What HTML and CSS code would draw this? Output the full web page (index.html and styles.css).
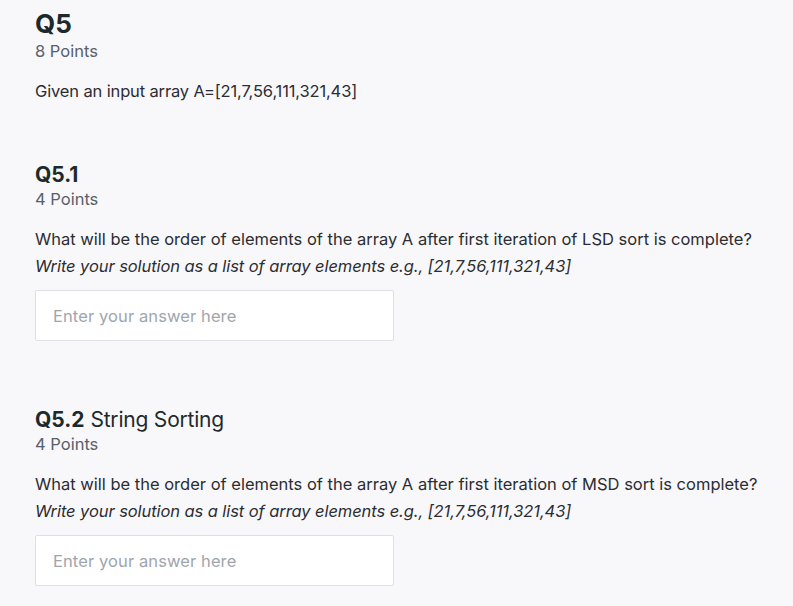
FILE: index.html
```html
<!DOCTYPE html>
<html>
<head>
<meta charset="utf-8">
<link rel="stylesheet" href="styles.css">
</head>
<body>
<div class="page">
  <section class="question">
    <div class="q-title main"><span class="q-num">Q5</span></div>
    <div class="q-points">8 Points</div>
    <div class="q-text intro">Given an input array A=[21,7,56,111,321,43]</div>
  </section>

  <section class="question sub">
    <div class="q-title"><span class="q-num">Q5.1</span></div>
    <div class="q-points">4 Points</div>
    <div class="q-text">
      <div class="line">What will be the order of elements of the array A after first iteration of LSD sort is complete?</div>
      <div class="line hint">Write your solution as a list of array elements e.g., [21,7,56,111,321,43]</div>
    </div>
    <div class="answer"><span class="placeholder">Enter your answer here</span></div>
  </section>

  <section class="question sub">
    <div class="q-title"><span class="q-num">Q5.2</span> <span class="q-name">String Sorting</span></div>
    <div class="q-points">4 Points</div>
    <div class="q-text">
      <div class="line">What will be the order of elements of the array A after first iteration of MSD sort is complete?</div>
      <div class="line hint">Write your solution as a list of array elements e.g., [21,7,56,111,321,43]</div>
    </div>
    <div class="answer"><span class="placeholder">Enter your answer here</span></div>
  </section>
</div>
</body>
</html>
```
FILE: styles.css
```css
html, body {
  margin: 0;
  padding: 0;
  background: #f8f8fa;
}
body {
  font-family: Inter, "Open Sans", sans-serif;
  color: #2b2d33;
}
.page {
  padding: 8px 35px 0 35px;
}
.question {
  display: flex;
  flex-direction: column;
  align-items: flex-start;
}
.question.sub {
  margin-top: 56px;
}
.q-title {
  font-size: 21px;
  line-height: 27px;
  font-weight: 400;
  color: #1d2a2c;
  white-space: nowrap;
}
.q-title.main {
  font-size: 26px;
  line-height: 32px;
}
.q-num {
  font-weight: 700;
}
.q-name {
  font-weight: 400;
  letter-spacing: -0.2px;
}
.q-points {
  font-size: 16.5px;
  line-height: 22px;
  color: #59606b;
}
.q-text {
  margin-top: 16px;
  font-size: 16.5px;
  line-height: 27px;
  color: #2b2d33;
  white-space: nowrap;
}
.q-text.intro {
  letter-spacing: -0.14px;
}
.hint {
  font-style: italic;
  letter-spacing: -0.08px;
}
.answer {
  margin-top: 10px;
  margin-bottom: 9px;
  width: 359px;
  height: 51px;
  box-sizing: border-box;
  background: #ffffff;
  border: 1px solid #dde0e4;
  border-radius: 2px;
  display: flex;
  align-items: center;
  padding-left: 17px;
}
.placeholder {
  font-size: 16.5px;
  letter-spacing: 0.1px;
  color: #a0a5ad;
}
```
